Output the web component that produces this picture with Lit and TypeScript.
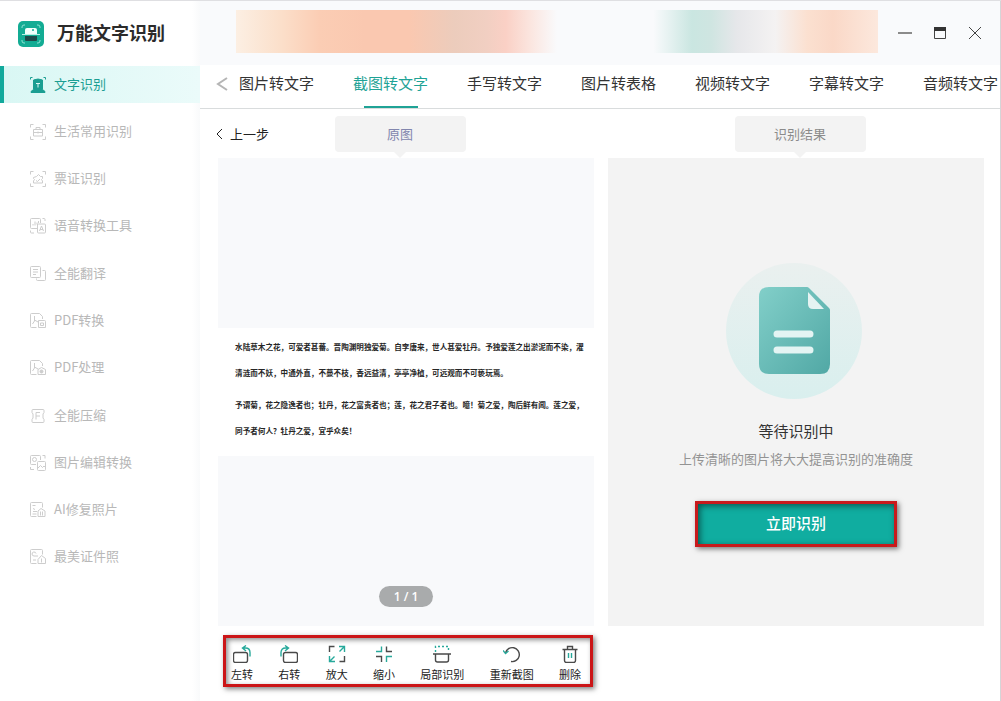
import { LitElement, html, css, svg, TemplateResult } from "lit";
import { customElement, state } from "lit/decorators.js";
import { classMap } from "lit/directives/class-map.js";

interface NavItem {
  label: string;
  icon: TemplateResult;
}

const corners = svg`<path d="M.5 3.5v-3h3M12.500 .5h3v3M15.500 12.500v3h-3M3.500 15.500h-3v-3"/>`;

const navItems: NavItem[] = [
  {
    label: "文字识别",
    icon: svg`<path d="M.5 2.500v-2h2M13.500 .5h2v2"/><path fill="currentColor" d="M3.500 3q4.500-2 9 0v9.500l2.500 2v1h-14v-1l2.500-2z"/><path stroke="#e0f7f5" d="M6 6.500h4M8 6.500v4"/>`,
  },
  {
    label: "生活常用识别",
    icon: svg`${corners}<path d="M3.500 5.500h9v6.500h-9zM6 5.500v-2h4v2M3.500 8.500h9M8 7.500v2"/>`,
  },
  {
    label: "票证识别",
    icon: svg`${corners}<path d="M3.500 6.500l3-1 2-2 2 2h2v2l-1 1 1 1.500v2h-9v-2l1-1.500-1-1zM6 9.500l1.500 1 2.500-2.500"/>`,
  },
  {
    label: "语音转换工具",
    icon: svg`<path d="M7 10.500H1.500a1 1 0 0 1-1-1v-8a1 1 0 0 1 1-1h8a1 1 0 0 1 1 1V5M3 6v1.500M5 3.500v4M7 4.500v2M8.500 3v2M7.500 6h7a1 1 0 0 1 1 1v7a1 1 0 0 1-1 1h-6a1 1 0 0 1-1-1V6M9.500 13l2-5 2 5M10 11.500h3M.5 12.500v1.500a1 1 0 0 0 1 1h2.500M12.500 .5h1.500a1 1 0 0 1 1 1v1.500"/>`,
  },
  {
    label: "全能翻译",
    icon: svg`<path d="M1.500 .5h8a1 1 0 0 1 1 1v9a1 1 0 0 1-1 1h-8a1 1 0 0 1-1-1v-9a1 1 0 0 1 1-1zM3 3.500h5M3 6h5M3 8.500h3M12.500 4.500h2a1 1 0 0 1 1 1v8a1 1 0 0 1-1 1h-7a1 1 0 0 1-1-1v-1"/>`,
  },
  {
    label: "PDF转换",
    icon: svg`<path d="M6.500 14.500h-5a1 1 0 0 1-1-1v-12a1 1 0 0 1 1-1h8l3 3v2.500M4.500 3v5l-2 3M4.500 7l3.500 2M8.500 7.500h6a1 1 0 0 1 1 1v6h-7zM10.500 10h3v2.500h-3z"/>`,
  },
  {
    label: "PDF处理",
    icon: svg`<path d="M6.500 14.500h-5a1 1 0 0 1-1-1v-12a1 1 0 0 1 1-1h8l3 3v2.500M4.500 3v5l-2 3M4.500 7l3.500 2M8 9.500l3.500-2 4 2v5h-7.500z"/><circle cx="11.500" cy="11.500" r="1.500" fill="currentColor"/>`,
  },
  {
    label: "全能压缩",
    icon: svg`<path d="M3 1.500h10a1 1 0 0 1 1 1v2l-1 1.500v4l1 1.500v2a1 1 0 0 1-1 1h-10a1 1 0 0 1-1-1v-2l1-1.500v-4l-1-1.500v-2a1 1 0 0 1 1-1zM6 4.500h4M6 4.500v7M6 8h4"/>`,
  },
  {
    label: "图片编辑转换",
    icon: svg`<path d="M6 9.500h-4.500a1 1 0 0 1-1-1v-7a1 1 0 0 1 1-1h8a1 1 0 0 1 1 1v3.500M8.500 6.500h6a1 1 0 0 1 1 1v7a1 1 0 0 1-1 1h-6a1 1 0 0 1-1-1v-7a1 1 0 0 1 1-1zM8 13l2.500-2.500 2 2 1.500-1.500 1.500 1.500M.5 12v2.500h3.500M12.500 .5h2.500v3"/><circle cx="4.500" cy="4.500" r="2"/>`,
  },
  {
    label: "AI修复照片",
    icon: svg`<path d="M6.500 14.500h-5a1 1 0 0 1-1-1v-12a1 1 0 0 1 1-1h10a1 1 0 0 1 1 1v4M2.500 3.500h3M3 6.500l2 1M2.500 12h4M8 14.500v-5.500l3-2.500 4 2.500v5.500zM10.500 9.500v4M12.500 9.500v4M3 9.500h4"/>`,
  },
  {
    label: "最美证件照",
    icon: svg`<path d="M6.500 14.500h-5a1 1 0 0 1-1-1v-12a1 1 0 0 1 1-1h10a1 1 0 0 1 1 1v4M6 4.500a2 2 0 1 0-2 2.500h4M8 14.500v-4l3.500-4 4 3v5zM11.500 9.500v4M3 11h3"/>`,
  },
];

const tabs = ["图片转文字", "截图转文字", "手写转文字", "图片转表格", "视频转文字", "字幕转文字", "音频转文字"];

const tools: NavItem[] = [
  {
    label: "左转",
    icon: svg`<rect x=".5" y="7.500" width="14" height="10" rx="2"/><path class="accent" d="M9.500 3h3q4.500 0 4.500 4.500v4M13 .5l-3.500 2.500 3.500 3"/>`,
  },
  {
    label: "右转",
    icon: svg`<rect x="3.500" y="7.500" width="14" height="10" rx="2"/><path class="accent" d="M8.500 3h-3q-4.500 0-4.500 4.500v4M5 .5l3.500 2.500-3.500 3"/>`,
  },
  {
    label: "放大",
    icon: svg`<path d="M1.500 7v-5.500h5M16.500 11v5.500h-5"/><path class="accent" d="M11 1.500h5.500v5.500M16.500 1.500l-5 5M1.500 11v5.500h5.500M1.500 16.500l5-5"/>`,
  },
  {
    label: "缩小",
    icon: svg`<path d="M11.500 1.500v5h5.500M6.500 17v-5.500h-5.500"/><path class="accent" d="M1 6.500h5.500v-5M11.500 17v-5.500h5.500"/>`,
  },
  {
    label: "局部识别",
    icon: svg`<path d="M0 9h18M2.500 9v6a2 2 0 0 0 2 2h9a2 2 0 0 0 2-2v-6"/><path class="accent" stroke-dasharray="2 2" d="M2.500 7v-5.500h13v5.500"/>`,
  },
  {
    label: "重新截图",
    icon: svg`<path d="M2.500 8a7 7 0 1 1 5.500 8.500"/><path class="accent" d="M0 5.500l2.500 3 3-2.500"/>`,
  },
  {
    label: "删除",
    icon: svg`<path d="M1.500 4.500h15M3.500 4.500v11a2 2 0 0 0 2 2h7a2 2 0 0 0 2-2v-11M6.500 4v-2.500h5v2.500"/><path class="accent" d="M7.500 8v5M10.500 8v5"/>`,
  },
];

const documentLines = [
  { y: 46, text: "水陆草木之花，可爱者甚蕃。晋陶渊明独爱菊。自李唐来，世人甚爱牡丹。予独爱莲之出淤泥而不染，濯" },
  { y: 102, text: "清涟而不妖，中通外直，不蔓不枝，香远益清，亭亭净植，可远观而不可亵玩焉。" },
  { y: 168, text: "予谓菊，花之隐逸者也；牡丹，花之富贵者也；莲，花之君子者也。噫！菊之爱，陶后鲜有闻。莲之爱，" },
  { y: 224, text: "同予者何人？牡丹之爱，宜乎众矣！" },
];

@customElement("side-nav")
export class SideNav extends LitElement {
  @state() private active = 0;

  static styles = css`
    :host {
      display: block;
      background: linear-gradient(to left, #f9fafb, #ffffff 8px);
    }
    .brand {
      display: flex;
      align-items: center;
      gap: 13px;
      height: 65px;
      padding-left: 18px;
      box-sizing: border-box;
    }
    .brand svg {
      width: 26px;
      height: 26px;
    }
    .brand h1 {
      margin: 0;
      padding-bottom: 3px;
      font-size: 18px;
      line-height: 26px;
      font-weight: 700;
      color: #2b2b2b;
    }
    .menu {
      display: flex;
      flex-direction: column;
      justify-content: space-between;
      min-height: 510px;
      margin: 0;
      padding: 0;
      list-style: none;
    }
    .item {
      display: flex;
      align-items: center;
      gap: 8px;
      width: 100%;
      height: 37px;
      padding: 0 0 0 26px;
      border: 0;
      border-left: 4px solid transparent;
      background: none;
      color: #b8b8b8;
      font: inherit;
      font-size: 13px;
      line-height: 20px;
      text-align: left;
      cursor: pointer;
    }
    .item span {
      padding-bottom: 2px;
    }
    .item svg {
      width: 16px;
      height: 16px;
      fill: none;
      stroke: currentColor;
      opacity: 0.7;
    }
    .item.active {
      border-left-color: #12a99c;
      background: linear-gradient(to right, #d9f7f4, #ebfbfa);
      color: #1b9e92;
    }
    .item.active svg {
      opacity: 1;
    }
  `;

  render() {
    return html`
      <div class="brand">
        <svg viewBox="0 0 26 26" aria-hidden="true">
          <rect width="26" height="26" rx="5" fill="#13ac94" />
          <path d="M4 7V6a2 2 0 0 1 2-2h1M19 4h1a2 2 0 0 1 2 2v1M22 19v1a2 2 0 0 1-2 2h-1M7 22H6a2 2 0 0 1-2-2v-1" fill="none" stroke="#8fe3d3" />
          <path d="M7 13V9a2 2 0 0 1 2-2h8a2 2 0 0 1 2 2v4z" fill="#f2fffc" />
          <circle cx="15" cy="9" r="1" fill="#13ac94" />
          <path d="M4 13h18v1H4z" fill="#b9efe4" />
          <path d="M7 15h12v4a1 1 0 0 1-1 1H8a1 1 0 0 1-1-1z" fill="#1f4a4a" />
        </svg>
        <h1>万能文字识别</h1>
      </div>
      <nav>
        <ul class="menu">
          ${navItems.map(
            (item, i) => html`<li>
              <button class=${classMap({ item: true, active: i === this.active })} @click=${() => (this.active = i)}>
                <svg viewBox="0 0 16 16" aria-hidden="true">${item.icon}</svg><span>${item.label}</span>
              </button>
            </li>`
          )}
        </ul>
      </nav>
    `;
  }
}

@customElement("title-bar")
export class TitleBar extends LitElement {
  static styles = css`
    :host {
      display: flex;
      align-items: center;
      height: 64px;
      box-sizing: border-box;
      padding: 0 8px 0 36px;
      background: #f9fafc;
    }
    .banner {
      flex: 1;
      height: 43px;
      margin: 0 9px 4px 0;
      background: linear-gradient(
        to right,
        #fcefe3,
        #fbdfca 7%,
        #fbcdb4 13%,
        #fac8b0 20%,
        #fac8b0 27%,
        #ecccbc 34%,
        #f1cfc2 39%,
        #fad0c5 42%,
        #fbe6e0 46%,
        #f9fafc 50%,
        #f9fafc 65%,
        #cae6e1 71%,
        #cfe5e1 74%,
        #e6e7ea 78%,
        #f4f2f2 84%,
        #fbe0d0 89%,
        #fad8c7 93%,
        #fce8dd
      );
    }
    .control {
      display: grid;
      place-items: center;
      width: 35px;
      height: 35px;
      padding: 0;
      border: 0;
      background: none;
      cursor: pointer;
    }
    .control svg {
      width: 14px;
      height: 14px;
      fill: none;
      stroke: #444444;
    }
  `;

  render() {
    return html`
      <div class="banner"></div>
      <button class="control" aria-label="最小化">
        <svg viewBox="0 0 14 14"><path d="M0 7h14" stroke-width="2" stroke="#8b8b8b" /></svg>
      </button>
      <button class="control" aria-label="最大化">
        <svg viewBox="0 0 14 14"><path d="M1.500 1.500h11v11h-11z" /><path d="M1 1h12v4H1z" fill="#333333" stroke="none" /></svg>
      </button>
      <button class="control" aria-label="关闭">
        <svg viewBox="0 0 14 14"><path d="M1 1l12 12M13 1L1 13" /></svg>
      </button>
    `;
  }
}

@customElement("tab-strip")
export class TabStrip extends LitElement {
  @state() private active = 1;

  static styles = css`
    :host {
      display: flex;
      height: 44px;
      box-sizing: border-box;
      padding-left: 15px;
      border-bottom: 1px solid #d9dcdd;
      background: #ffffff;
      overflow: hidden;
    }
    button {
      flex: none;
      padding: 0;
      border: 0;
      background: none;
      font: inherit;
      cursor: pointer;
    }
    .scroll {
      width: 24px;
      padding-bottom: 5px;
    }
    .scroll svg {
      display: block;
      width: 16px;
      height: 16px;
      fill: none;
      stroke: #b5b5b5;
      stroke-width: 2;
    }
    .tabs {
      display: flex;
      gap: 39px;
    }
    .tab {
      display: flex;
      flex-direction: column;
      align-items: center;
      justify-content: space-between;
      padding-top: 7px;
      color: #333333;
      font-size: 15px;
      line-height: 22px;
      white-space: nowrap;
    }
    .tab.active {
      color: #1fa396;
    }
    .tab.active::after {
      content: "";
      width: 54px;
      height: 2px;
      background: #1fa396;
    }
  `;

  render() {
    return html`
      <button class="scroll" aria-label="向左滚动">
        <svg viewBox="0 0 16 16"><path d="M12 2L3 8l9 6" /></svg>
      </button>
      <div class="tabs" role="tablist">
        ${tabs.map(
          (tab, i) => html`<button
            class=${classMap({ tab: true, active: i === this.active })}
            role="tab"
            aria-selected=${i === this.active}
            @click=${() => (this.active = i)}
          >
            <span>${tab}</span>
          </button>`
        )}
      </div>
    `;
  }
}

@customElement("source-pane")
export class SourcePane extends LitElement {
  static styles = css`
    :host {
      display: flex;
      flex-direction: column;
      gap: 9px;
    }
    .viewer {
      position: relative;
      display: flex;
      flex: 1;
      flex-direction: column;
      justify-content: center;
      background: #f8f9fb;
    }
    .page {
      display: block;
      width: 100%;
      background: #ffffff;
    }
    .page text {
      font-size: 16px;
      font-weight: 700;
      fill: #262626;
    }
    .pager {
      position: absolute;
      bottom: 19px;
      left: 50%;
      width: 54px;
      margin-left: -27px;
      border-radius: 11px;
      background: #a9abac;
      color: #ffffff;
      font-family: "Open Sans", "Noto Sans", sans-serif;
      font-size: 12px;
      line-height: 21px;
      font-weight: 600;
      text-align: center;
    }
    .toolbar {
      display: flex;
      justify-content: space-between;
      height: 52px;
      box-sizing: border-box;
      margin: 0 1px 0 5px;
      padding: 7px 9px 0 5px;
      border: 3px solid #cb1517;
      box-shadow: 2px 2px 5px rgba(0, 0, 0, 0.5), inset 2px 2px 5px rgba(0, 0, 0, 0.45);
    }
    .tool {
      display: flex;
      flex-direction: column;
      align-items: center;
      gap: 3px;
      padding: 0;
      border: 0;
      background: none;
      color: #222222;
      font: inherit;
      font-size: 11px;
      line-height: 16px;
      white-space: nowrap;
      cursor: pointer;
    }
    .tool svg {
      width: 18px;
      height: 18px;
      fill: none;
      stroke: #4a4a4a;
      stroke-width: 1.4;
    }
    .tool .accent {
      stroke: #27a99b;
    }
  `;

  render() {
    return html`
      <div class="viewer">
        <svg class="page" viewBox="0 0 792 270" role="img">
          ${documentLines.map((line) => svg`<text x="36" y=${line.y}>${line.text}</text>`)}
        </svg>
        <span class="pager">1 / 1</span>
      </div>
      <div class="toolbar" role="toolbar">
        ${tools.map(
          (tool) => html`<button class="tool">
            <svg viewBox="0 0 18 18" aria-hidden="true">${tool.icon}</svg><span>${tool.label}</span>
          </button>`
        )}
      </div>
    `;
  }
}

@customElement("result-pane")
export class ResultPane extends LitElement {
  static styles = css`
    :host {
      display: flex;
      flex-direction: column;
      align-items: center;
      box-sizing: border-box;
      height: 468px;
      padding-top: 105px;
      background: #f3f3f3;
    }
    .art {
      width: 140px;
      height: 136px;
    }
    h2 {
      margin: 21px 0 0;
      color: #333333;
      font-size: 15px;
      line-height: 22px;
      font-weight: 400;
    }
    p {
      margin: 7px 0 0;
      color: #939393;
      font-size: 13px;
      line-height: 20px;
    }
    .start {
      width: 202px;
      height: 46px;
      margin-top: 32px;
      padding: 0 0 4px;
      border: 3px solid #c81a1c;
      background: #10ada0;
      box-shadow: 2px 2px 5px rgba(0, 0, 0, 0.5), inset 2px 2px 6px rgba(0, 0, 0, 0.5);
      color: #ffffff;
      font: inherit;
      font-size: 15px;
      font-weight: 500;
      cursor: pointer;
    }
  `;

  render() {
    return html`
      <svg class="art" viewBox="0 0 140 136" aria-hidden="true">
        <defs>
          <linearGradient id="disc" x1="0" y1="0" x2="0" y2="1">
            <stop offset="0" stop-color="#eaf0ef" />
            <stop offset="1" stop-color="#d9efee" />
          </linearGradient>
          <linearGradient id="sheet" x1="0" y1="0" x2="1" y2="1">
            <stop offset="0" stop-color="#82cfc9" />
            <stop offset="1" stop-color="#51a8a5" />
          </linearGradient>
        </defs>
        <circle cx="68" cy="68" r="68" fill="url(#disc)" />
        <path d="M43 24h38q1 0 2 1l20 20q1 1 1 2v54q0 10-10 10H43q-10 0-10-10V34q0-10 10-10z" fill="url(#sheet)" />
        <path d="M82 29l16 17H87q-5 0-5-5z" fill="#e6f3f2" />
        <path d="M51 71h33M51 87h33" stroke="#e4f4f3" stroke-width="7" stroke-linecap="round" />
      </svg>
      <h2>等待识别中</h2>
      <p>上传清晰的图片将大大提高识别的准确度</p>
      <button class="start">立即识别</button>
    `;
  }
}

@customElement("app-root")
export class AppRoot extends LitElement {
  static styles = css`
    :host {
      display: grid;
      grid-template-columns: 200px minmax(0, 1fr);
      min-height: 100vh;
      box-sizing: border-box;
      border-top: 1px solid #dfdfe2;
      background: #ffffff;
      font-family: "Noto Sans CJK SC", sans-serif;
    }
    .main {
      border-right: 1px solid #d5d5d7;
    }
    .heads {
      display: grid;
      grid-template-columns: 1fr 1fr;
      padding-top: 7px;
    }
    .head {
      display: grid;
      grid-template-columns: 1fr 131px 1fr;
      align-items: center;
    }
    .back {
      display: flex;
      align-items: center;
      gap: 6px;
      margin-bottom: 6px;
      padding: 0 0 0 15px;
      border: 0;
      background: none;
      color: #222222;
      font: inherit;
      font-size: 13px;
      line-height: 20px;
      cursor: pointer;
    }
    .back svg {
      width: 9px;
      height: 10px;
      fill: none;
      stroke: currentColor;
    }
    .bubble {
      grid-column: 2;
      display: flex;
      flex-direction: column;
      align-items: center;
      color: #8b8b8b;
      font-size: 13px;
      line-height: 36px;
    }
    .bubble span {
      width: 100%;
      border-radius: 4px;
      background: #f3f3f3;
      text-align: center;
    }
    .bubble::after {
      content: "";
      border: 6px solid transparent;
      border-top-color: #f3f3f3;
      border-bottom: 0;
    }
    .bubble.source {
      color: #8286ae;
    }
    .panes {
      display: grid;
      grid-template-columns: 1fr 1fr;
      align-items: start;
      gap: 14px;
      padding: 0 16px 14px 18px;
    }
    .panes source-pane {
      height: 529px;
    }
  `;

  render() {
    return html`
      <side-nav></side-nav>
      <div class="main">
        <title-bar></title-bar>
        <tab-strip></tab-strip>
        <div class="heads">
          <div class="head">
            <button class="back"><svg viewBox="0 0 9 10" aria-hidden="true"><path d="M7 0L2 5l5 5" /></svg>上一步</button>
            <div class="bubble source"><span>原图</span></div>
          </div>
          <div class="head">
            <div class="bubble"><span>识别结果</span></div>
          </div>
        </div>
        <div class="panes">
          <source-pane></source-pane>
          <result-pane></result-pane>
        </div>
      </div>
    `;
  }
}
